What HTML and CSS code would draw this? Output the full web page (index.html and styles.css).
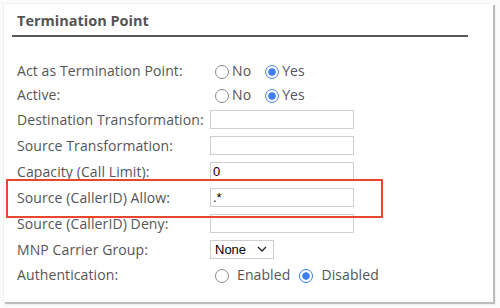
FILE: index.html
```html
<!DOCTYPE html>
<html>
<head>
<meta charset="utf-8">
<link rel="stylesheet" href="styles.css">
</head>
<body>
<div class="card">
  <div class="header"><h2 class="title">Termination Point</h2></div>
  <div class="form">
    <div class="row radio-row first">
      <span class="label">Act as Termination Point:</span>
      <span class="ctl"><span class="radio"></span><span class="rtext">No</span><span class="radio on"></span><span class="rtext">Yes</span></span>
    </div>
    <div class="row radio-row second">
      <span class="label">Active:</span>
      <span class="ctl"><span class="radio"></span><span class="rtext">No</span><span class="radio on"></span><span class="rtext">Yes</span></span>
    </div>
    <div class="row">
      <span class="label">Destination Transformation:</span>
      <span class="input"></span>
    </div>
    <div class="row">
      <span class="label">Source Transformation:</span>
      <span class="input"></span>
    </div>
    <div class="row">
      <span class="label">Capacity (Call Limit):</span>
      <span class="input">0</span>
    </div>
    <div class="row">
      <span class="label">Source (CallerID) Allow:</span>
      <span class="input">.*</span>
    </div>
    <div class="row">
      <span class="label">Source (CallerID) Deny:</span>
      <span class="input"></span>
    </div>
    <div class="row">
      <span class="label">MNP Carrier Group:</span>
      <span class="select">None<svg class="chev" width="10" height="6" viewBox="0 0 10 6"><path d="M1 1 L5 5 L9 1" fill="none" stroke="#222" stroke-width="1.3"/></svg></span>
    </div>
    <div class="row auth-row">
      <span class="label">Authentication:</span>
      <span class="ctl auth"><span class="radio"></span><span class="rtext">Enabled</span><span class="radio on"></span><span class="rtext">Disabled</span></span>
    </div>
  </div>
  <div class="highlight"></div>
</div>
</body>
</html>
```
FILE: styles.css
```css
html, body {
  margin: 0;
  padding: 0;
  background: #fbfbfb;
}
body {
  width: 500px;
  height: 308px;
  overflow: hidden;
  font-family: "Open Sans", "Liberation Sans", sans-serif;
  color: #555;
}
.card {
  position: relative;
  margin: 3px 0 0 3px;
  width: 490px;
  height: 299px;
  box-sizing: border-box;
  background: #fff;
  border-left: 1px solid #f0f0f0;
  border-top: 1px solid #f0f0f0;
  box-shadow: 2px 2px 1px #bcbcbc;
}
.header {
  margin: 0 25px 0 8px;
  padding: 7px 0 5px 5px;
  border-bottom: 2px solid #575757;
}
.title {
  margin: 0;
  font-size: 14.5px;
  line-height: 19px;
  font-weight: 700;
  color: #555;
}
.form {
  padding: 22px 0 0 13px;
  display: flex;
  flex-direction: column;
}
.row {
  display: flex;
  align-items: center;
  height: 26px;
  font-size: 14px;
}
.row.radio-row { height: 23px; }
.row.second { height: 24px; }
.row.auth-row { height: 24px; }
.label {
  width: 193px;
  flex: none;
  white-space: nowrap;
  letter-spacing: 0.1px;
}
.ctl {
  display: flex;
  align-items: center;
  padding-left: 5px;
}
.radio {
  width: 14px;
  height: 14px;
  box-sizing: border-box;
  border: 1px solid #8a8a8a;
  border-radius: 50%;
  background: #fff;
  margin-top: 3px;
  flex: none;
}
.radio.on {
  border: 1.5px solid #3a7ff6;
  background: radial-gradient(circle, #3a7ff6 0 3.4px, #fff 4px);
}
.rtext {
  margin: 0 14px 0 3px;
  letter-spacing: 0.1px;
}
.auth .rtext { margin: 0 9px 0 8px; }
.input {
  width: 144px;
  height: 19px;
  box-sizing: border-box;
  border: 1px solid #cfcfcf;
  background: #fff;
  font-family: "Liberation Sans", Arial, sans-serif;
  font-size: 13px;
  line-height: 17px;
  color: #000;
  padding-left: 2px;
}
.select {
  width: 64px;
  height: 19px;
  box-sizing: border-box;
  border: 1px solid #cfcfcf;
  background: #fff;
  font-family: "Liberation Sans", Arial, sans-serif;
  font-size: 13px;
  line-height: 17px;
  color: #000;
  padding-left: 4px;
  display: flex;
  align-items: center;
  justify-content: space-between;
  padding-right: 6px;
}
.chev { display: block; }
.highlight {
  position: absolute;
  left: 2px;
  top: 175px;
  width: 377px;
  height: 39px;
  box-sizing: border-box;
  border: 2px solid #e8472f;
}
```
